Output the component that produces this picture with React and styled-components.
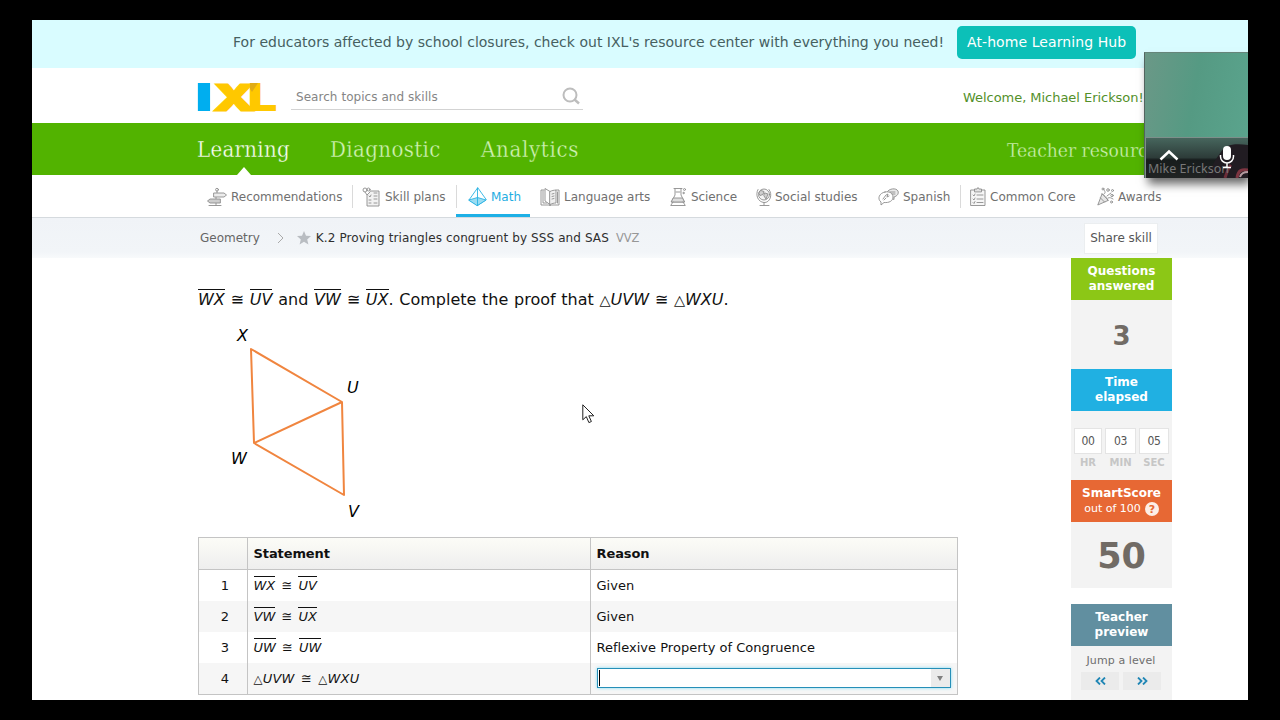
import React from "react";
import styled, { createGlobalStyle } from "styled-components";

const GlobalStyle = createGlobalStyle`
  * {
    box-sizing: border-box;
  }
  body {
    margin: 0;
    background: #000;
    font-family: "DejaVu Sans", Verdana, sans-serif;
    font-size: 12px;
  }
`;

const Stage = styled.div`
  width: 1280px;
  height: 720px;
  padding: 20px 32px;
  background: #000;
  overflow: hidden;
`;

const Screen = styled.div`
  position: relative;
  height: 680px;
  background: #fff;
  overflow: hidden;
`;

const T = styled.span`
  letter-spacing: ${(props) => props.$ls || 0}px;
  white-space: nowrap;
`;

const Banner = styled.div`
  display: flex;
  align-items: center;
  height: 48px;
  padding: 0 0 4px 201px;
  background: #d9fcff;
  color: #46605f;
  font-size: 14px;
`;

const HubButton = styled.button`
  width: 179px;
  height: 33px;
  margin-left: 13px;
  padding: 0;
  border: none;
  border-radius: 5px;
  background: #0cc0b8;
  color: #fff;
  font: 14px "DejaVu Sans", sans-serif;
`;

const Header = styled.header`
  display: flex;
  height: 55px;
  padding-left: 166px;
`;

const Logo = styled.svg`
  width: 80px;
  height: 30px;
  margin-top: 14px;
  overflow: visible;
`;

const Search = styled.div`
  display: flex;
  align-items: center;
  justify-content: space-between;
  width: 292px;
  height: 27px;
  margin: 15px 0 0 13px;
  padding: 0 3px 0 5px;
  border-bottom: 1px solid #d3d3d3;
  color: #858585;

  span {
    padding-top: 1px;
  }
`;

const Welcome = styled.div`
  margin: 21px 0 0 380px;
  color: #53902a;
  font-size: 13px;
  line-height: 18px;
`;

const MainNav = styled.nav`
  display: flex;
  height: 52px;
  padding-left: 165px;
  background: #52b300;
  font-family: "DejaVu Serif Condensed", "DejaVu Serif", serif;
  line-height: 54px;
  -webkit-text-stroke: 0.3px #52b300;
`;

const MainTab = styled.div`
  display: flex;
  flex-direction: column;
  width: ${(props) => props.$w}px;
  height: 52px;
  color: ${(props) => (props.$active ? "#fbfff6" : "#d2f3b6")};
  font-size: ${(props) => props.$size || 22}px;
`;

const Notch = styled.div`
  width: 0;
  margin: -10px 0 0 40px;
  border: 7px solid transparent;
  border-top: 0;
  border-bottom: 8px solid #fff;
`;

const SubNav = styled.nav`
  display: flex;
  height: 43px;
  padding-left: 165px;
  border-bottom: 1px solid #d5dade;
`;

const SubTab = styled.div`
  position: relative;
  display: flex;
  align-items: center;
  width: ${(props) => props.$w}px;
  height: 42px;
  padding: 4px 0 0 ${(props) => props.$pl || 10}px;
  color: ${(props) => (props.$active ? "#1fade2" : "#707070")};
  border-bottom: 3px solid ${(props) => (props.$active ? "#1eb0e6" : "transparent")};

  svg {
    margin-right: ${(props) => props.$gap || 4}px;
  }

  &::after {
    content: "";
    position: absolute;
    right: -1px;
    top: 10px;
    width: 1px;
    height: 23px;
    background: ${(props) => (props.$divider ? "#dadada" : "transparent")};
  }
`;

const Crumbs = styled.div`
  display: flex;
  align-items: center;
  height: 40px;
  padding-left: 168px;
  background: linear-gradient(#f0f3f7, #f2f5f8 85%, #f8fafb);
  color: #666;
`;

const Star = styled.svg`
  margin: 0 5px 0 12px;
`;

const SkillName = styled.span`
  color: #2e2e2e;
`;

const Code = styled.span`
  margin-left: 7px;
  color: #979797;
  font-size: 11.5px;
`;

const Share = styled.div`
  display: flex;
  align-items: center;
  justify-content: center;
  width: 74px;
  height: 31px;
  margin: 0 90px 0 auto;
  border: 1px solid #ebeef0;
  background: #fff;
  color: #555;
`;

const Body = styled.main`
  display: flex;
  justify-content: space-between;
  padding: 0 76px 0 166px;
`;

const Work = styled.section`
  width: 760px;
`;

const Question = styled.div`
  display: flex;
  align-items: center;
  height: 22px;
  margin-top: 30px;
  color: #111;
  font-size: 16px;
  white-space: pre;
  word-spacing: 0.7px;
`;

const Seg = styled.i`
  display: inline-block;
  height: ${(props) => (props.$small ? 19 : 20)}px;
  border-top: 1px solid #111;
  line-height: ${(props) => (props.$small ? 17 : 20)}px;
`;

const Tri = styled.span`
  font-size: 0.9em;
`;

const Figure = styled.svg`
  display: block;
  width: 180px;
  height: 227px;
  font: italic 16px "DejaVu Sans", sans-serif;
`;

const Table = styled.div`
  display: grid;
  grid-template-columns: 48px 343px 1fr;
  width: 760px;
  height: 158px;
  border: 1px solid #c4c4c4;
  font-size: 13px;
  color: #111;
`;

const Cell = styled.div`
  display: flex;
  align-items: center;
  height: 31px;
  padding: ${(props) => (props.$num ? "0 0 0 4px" : "0 6px 0 5.5px")};
  justify-content: ${(props) => (props.$num ? "center" : "flex-start")};
  border-left: ${(props) => (props.$num ? 0 : "1px solid #c4c4c4")};
  background: ${(props) => (props.$even ? "#f6f6f6" : "#fff")};
  white-space: pre;
  word-spacing: ${(props) => (props.$math ? 2 : 0)}px;
`;

const HeadCell = styled(Cell)`
  height: 32px;
  border-bottom: 1px solid #c4c4c4;
  background: linear-gradient(#fcfcf7, #eeeeee);
  font-weight: bold;
  letter-spacing: -0.1px;
`;

const Select = styled.div`
  display: flex;
  align-items: center;
  justify-content: space-between;
  width: 354px;
  height: 20px;
  margin-bottom: 1px;
  padding-left: 1px;
  border: 1px solid #268fb8;
  box-shadow: 0 0 3px #7fdcf5;
  background: #fff;
`;

const Caret = styled.div`
  width: 1px;
  height: 16px;
  background: #000;
`;

const Arrow = styled.div`
  display: flex;
  align-items: center;
  justify-content: center;
  width: 19px;
  height: 18px;
  background: #ebebeb;

  &::after {
    content: "";
    border: 3.5px solid transparent;
    border-top: 5px solid #808080;
    border-bottom: 0;
  }
`;

const Side = styled.aside`
  width: 101px;
  text-align: center;
`;

const SideTitle = styled.div`
  height: 42px;
  padding: 6px 0 0;
  background: ${(props) => props.$bg};
  color: #fff;
  font-size: 12px;
  font-weight: bold;
  line-height: 15px;
`;

const SubLine = styled.div`
  display: flex;
  align-items: center;
  justify-content: center;
  gap: 4px;
  height: 15px;
  font-size: 11px;
  font-weight: normal;
`;

const SidePanel = styled.div`
  height: ${(props) => props.$h}px;
  margin-bottom: ${(props) => props.$mb || 0}px;
  background: #f3f3f3;
  color: #716b65;
  font-weight: bold;
  font-size: ${(props) => props.$size || 12}px;
  line-height: ${(props) => props.$lh || props.$h + 2}px;
`;

const Timer = styled.div`
  display: grid;
  grid-template-columns: 28px 31px 30px;
  gap: 3px;
  padding: 17px 3px 0;
  font-size: 10px;
  line-height: 14px;
  color: #c6c6c6;
`;

const TimeBox = styled.div`
  height: 26px;
  margin-bottom: 2px;
  border: 1px solid #e4e4e4;
  background: #fff;
  color: #555;
  font: 12px/25px "DejaVu Sans Condensed", "DejaVu Sans", sans-serif;
  letter-spacing: -0.4px;
`;

const Jump = styled.div`
  display: grid;
  grid-template-columns: 38px 38px;
  justify-content: center;
  align-content: start;
  gap: 4px;
  height: 54px;
  padding: 8px 1px 0 0;
  background: #f3f3f3;
  color: #6e6e6e;
  font-size: 11px;
  line-height: 14px;
`;

const JumpLabel = styled.div`
  grid-column: 1 / 3;
`;

const JumpButton = styled.div`
  display: flex;
  align-items: center;
  justify-content: center;
  height: 18px;
  background: #ebebeb;
`;

/* floating webcam window on top of the page */
const Webcam = styled.div`
  position: absolute;
  left: 1112px;
  top: 32px;
  width: 104px;
  height: 126px;
  border-left: 1px solid #53645f;
  border-top: 1px solid #66857a;
  background: linear-gradient(100deg, #6b9887, #559a83 45%, #5ba58e);
  box-shadow: 3px 7px 9px -1px rgba(0, 0, 0, 0.6);
`;

const CamBar = styled.svg`
  display: block;
  margin-top: 84px;
`;

const Pointer = styled.svg`
  position: absolute;
  left: 550px;
  top: 384px;
`;

const Icon = ({ w = 20, active, children }) => (
  <svg
    width={w}
    height="20"
    viewBox={`0 0 ${w} 20`}
    fill="none"
    stroke={active ? "#29b2e3" : "#8d8d8d"}
    strokeWidth="0.9"
    strokeLinejoin="round"
    strokeLinecap="round"
  >
    {children}
  </svg>
);

const icons = {
  recommend: (
    <Icon w={20}>
      <circle cx="10" cy="2.7" r="1.4" />
      <path d="M10 4.200V6M9 10v2M9 16v2.500M2 18.500h12" />
      <path d="M7 6h10l2.500 2L17 10H7z" fill="#ececec" />
      <path d="M13 12H3l-2.500 2L3 16h10z" fill="#cdcdcd" />
    </Icon>
  ),
  plans: (
    <Icon w={18}>
      <path d="M8 4h9v15H5V8" fill="#f2f2f2" />
      <circle cx="3" cy="3" r="2" />
      <circle cx="6.500" cy="2.500" r="1.500" />
      <path d="M3 5l2 3 3-3M7 9l1 1 1-2M12 9h3M7 13h2M12 12h3M7 16h2M12 16h3M12 6h3" />
    </Icon>
  ),
  math: (
    <Icon w={19} active>
      <path d="M9.500 1L1 13l8.500 5.500L18 13z" />
      <path d="M1 13l8.500-2.500L18 13l-8.500 5.500z" fill="#9adcf2" />
      <path d="M9.500 1v17.500" />
    </Icon>
  ),
  language: (
    <Icon w={20}>
      <path d="M4 3H1v15h8l1 .8 1-.8h8V3h-3" />
      <path d="M10 4.5L5 1.5V14l5 3.5z" fill="#fff" />
      <path d="M10 4.5c2-1 4-1.5 6-1.3V16c-2 0-4 .5-6 1.5z" fill="#f0f0f0" />
      <path d="M3 4v12h4M12 7l2-.5M12 9.5l2-.5M12 12l2-.5M17.5 5v11" />
    </Icon>
  ),
  science: (
    <Icon w={17}>
      <path d="M4 1.500h8M5 2v6L1.500 15h13L11 8V2" />
      <path d="M3.500 11h9l2 4h-13z" fill="#dedede" />
      <path d="M1 18.500h14M3 15l-2 3M13 15l2 3M6 5h4" />
      <circle cx="14.500" cy="2.500" r="1" />
      <circle cx="13.500" cy="6" r=".7" />
    </Icon>
  ),
  social: (
    <Icon w={16}>
      <circle cx="8" cy="7.500" r="5.500" fill="#f4f4f4" />
      <path d="M5 3.500l3 1-1 3-3 1-1-2zM9 6l3 1-2 5-2-3z" fill="#cfcfcf" />
      <path d="M2 2.500C-1 8 2 15 8 15.500s9-8 5-13M8 15.500V18M4 18.500h9" />
    </Icon>
  ),
  spanish: (
    <Icon w={21}>
      <path d="M9 5c2-3.500 9-4.500 11-1 1 3-1 5-4 6v2.500L13 11" fill="#e9e9e9" />
      <path d="M7 5c4-1 8 1 8 5s-4 6-9 5.500L3 18v-3C-1 12 1 6 7 5z" fill="#fff" />
      <path d="M5 12l3-4 2-1-1 3 2-1M6 13l2-2M12 5h5M14 7h3" />
    </Icon>
  ),
  core: (
    <Icon w={16}>
      <path d="M1 3h14v15.500H1z" fill="#f6f6f6" />
      <path d="M4.500 4.500V2H7l1-1.500L9 2h2.500v2.500z" fill="#e2e2e2" />
      <path d="M3 8l1 1 1-2M3 12l1 1 1-2M3 15.500l1 1 1-2M7 8h6M7 12h6M7 15.500h6" />
    </Icon>
  ),
  awards: (
    <Icon w={17}>
      <path d="M5 7L.8 18 11 13.500z" fill="#e6e6e6" />
      <path d="M5 7c2 1 5 4 6 6.500M3.500 11l4 4M7 7c2-1 1-3 0-4M10 9l4-3M11 11c2-1 3 0 5 1" />
      <circle cx="6" cy="2" r="1" />
      <circle cx="11" cy="3" r="1.300" />
      <circle cx="15.500" cy="3.500" r="1" />
      <circle cx="15" cy="8.500" r="1.200" />
      <circle cx="14.500" cy="15" r="1" />
    </Icon>
  ),
};

const tabs = [
  { label: "Recommendations", icon: "recommend", w: 155, divider: true, ls: -0.02 },
  { label: "Skill plans", icon: "plans", w: 104, divider: true, gap: 5 },
  { label: "Math", icon: "math", w: 74, active: true, pl: 12 },
  { label: "Language arts", icon: "language", w: 130 },
  { label: "Science", icon: "science", w: 86, ls: -0.08 },
  { label: "Social studies", icon: "social", w: 122, gap: 3 },
  { label: "Spanish", icon: "spanish", w: 92, divider: true },
  { label: "Common Core", icon: "core", w: 127 },
  { label: "Awards", icon: "awards", w: 85 },
];

const rows = [
  { left: "WX", right: "UV", reason: "Given" },
  { left: "VW", right: "UX", reason: "Given" },
  { left: "UW", right: "UW", reason: "Reflexive Property of Congruence" },
];

const App = () => {
  return (
    <Stage>
      <GlobalStyle />
      <Screen>
        <Banner>
          <T $ls={0.015}>
            For educators affected by school closures, check out IXL's resource center with everything you need!
          </T>
          <HubButton>
            <T $ls={0.08}>At-home Learning Hub</T>
          </HubButton>
        </Banner>
        <Header>
          <Logo viewBox="0 0 80 30" fontFamily="Inter" fontWeight="900" fontSize="38.500">
            <text x="-3" y="29" fill="#00aeef" textLength="18" lengthAdjust="spacingAndGlyphs">I</text>
            <text x="14.500" y="28.500" fill="#ffc800" stroke="#ffc800" fontSize="37.500" textLength="43" lengthAdjust="spacingAndGlyphs">X</text>
            <text x="49.500" y="29" fill="#ffc800" textLength="30" lengthAdjust="spacingAndGlyphs">L</text>
            <path d="M52 1h8l-6 9-2-3z" fill="#e0ac16" />
          </Logo>
          <Search>
            <T $ls={0.05}>Search topics and skills</T>
            <svg width="18" height="18" viewBox="0 0 18 18" fill="none" stroke="#bdbdbd" strokeWidth="2">
              <circle cx="8" cy="8" r="6.500" />
              <path d="M12.500 12.500L17 16.500" strokeWidth="2.500" />
            </svg>
          </Search>
          <Welcome>
            <T $ls={-0.04}>Welcome, Michael Erickson!</T>
          </Welcome>
        </Header>
        <MainNav>
          <MainTab $w={133} $active>
            <T $ls={0.3}>Learning</T>
            <Notch />
          </MainTab>
          <MainTab $w={151}>
            <T $ls={0.4}>Diagnostic</T>
          </MainTab>
          <MainTab $w={526}>
            <T $ls={0.7}>Analytics</T>
          </MainTab>
          <MainTab $w={170} $size={19}>
            <T>Teacher resources</T>
          </MainTab>
        </MainNav>
        <SubNav>
          {tabs.map((tab) => (
            <SubTab
              key={tab.label}
              $w={tab.w}
              $pl={tab.pl}
              $gap={tab.gap}
              $active={tab.active}
              $divider={tab.divider}
            >
              {icons[tab.icon]}
              <T $ls={tab.ls}>{tab.label}</T>
            </SubTab>
          ))}
        </SubNav>
        <Crumbs>
          <T>Geometry</T>
          <svg width="8" height="12" viewBox="0 0 8 12" fill="none" stroke="#aaa" style={{ marginLeft: 17 }}>
            <path d="M1 1l5 5-5 5" />
          </svg>
          <Star width="14" height="14" viewBox="0 0 14 14" fill="#b9bdc2">
            <path d="M7 0l2 4.700 5 .4-3.800 3.300 1.200 5L7 10.700 2.600 13.400l1.200-5L0 5.100l5-.4z" />
          </Star>
          <SkillName>
            <T $ls={0.1}>K.2 Proving triangles congruent by SSS and SAS</T>
          </SkillName>
          <Code>VVZ</Code>
          <Share>
            <T>Share skill</T>
          </Share>
        </Crumbs>
        <Body>
          <Work>
            <Question>
              <Seg>WX</Seg> ≅ <Seg>UV</Seg> and <Seg>VW</Seg> ≅ <Seg>UX</Seg>
              <T $ls={-0.02}>. Complete the proof that <Tri>△</Tri><i>UVW</i> ≅ <Tri>△</Tri><i>WXU</i>.</T>
            </Question>
            <Figure viewBox="0 0 180 227">
              <g fill="none" stroke="#f0853f" strokeWidth="2" strokeLinejoin="round">
                <path d="M53 39L144 92L146 185L56 133Z" />
                <path d="M56 133L144 92" />
              </g>
              <text x="39" y="31">X</text>
              <text x="149" y="83">U</text>
              <text x="33" y="154">W</text>
              <text x="150" y="207">V</text>
            </Figure>
            <Table>
              <HeadCell $num />
              <HeadCell>Statement</HeadCell>
              <HeadCell>Reason</HeadCell>
              {rows.map((row, i) => (
                <React.Fragment key={i}>
                  <Cell $num $even={i % 2 === 1}>{i + 1}</Cell>
                  <Cell $math $even={i % 2 === 1}>
                    <Seg $small>{row.left}</Seg> ≅ <Seg $small>{row.right}</Seg>
                  </Cell>
                  <Cell $even={i % 2 === 1}>
                    <T $ls={0.02}>{row.reason}</T>
                  </Cell>
                </React.Fragment>
              ))}
              <Cell $num $even>4</Cell>
              <Cell $math $even>
                <T $ls={0.2}><Tri>△</Tri><i>UVW</i> ≅ <Tri>△</Tri><i>WXU</i></T>
              </Cell>
              <Cell $even>
                <Select>
                  <Caret />
                  <Arrow />
                </Select>
              </Cell>
            </Table>
          </Work>
          <Side>
            <SideTitle $bg="#8cc716">Questions<br />answered</SideTitle>
            <SidePanel $h={69} $lh={73} $size={26}>3</SidePanel>
            <SideTitle $bg="#20b0e2">Time<br />elapsed</SideTitle>
            <SidePanel $h={69}>
              <Timer>
                <div><TimeBox>00</TimeBox>HR</div>
                <div><TimeBox>03</TimeBox>MIN</div>
                <div><TimeBox>05</TimeBox>SEC</div>
              </Timer>
            </SidePanel>
            <SideTitle $bg="#e76834">
              SmartScore
              <SubLine>
                <T>out of 100</T>
                <svg width="14" height="14" viewBox="0 0 14 14">
                  <circle cx="7" cy="7" r="7" fill="#fdeee6" />
                  <text x="7" y="11" textAnchor="middle" fontSize="11" fontWeight="bold" fill="#e76834">?</text>
                </svg>
              </SubLine>
            </SideTitle>
            <SidePanel $h={66} $mb={16} $size={35}>50</SidePanel>
            <SideTitle $bg="#618fa0">Teacher<br />preview</SideTitle>
            <Jump>
              <JumpLabel><T $ls={0.1}>Jump a level</T></JumpLabel>
              <JumpButton>
                <svg width="11" height="8" viewBox="0 0 11 8" fill="none" stroke="#1f86b5" strokeWidth="1.800">
                  <path d="M5 0.500L1.500 4L5 7.500M10 0.500L6.500 4L10 7.500" />
                </svg>
              </JumpButton>
              <JumpButton>
                <svg width="11" height="8" viewBox="0 0 11 8" fill="none" stroke="#1f86b5" strokeWidth="1.800">
                  <path d="M1 0.500L4.500 4L1 7.500M6 0.500L9.500 4L6 7.500" />
                </svg>
              </JumpButton>
            </Jump>
          </Side>
        </Body>
        <Webcam>
          <CamBar width="103" height="41" viewBox="0 0 103 41">
            <defs>
              <linearGradient id="bar" x1="0" y1="0" x2="0" y2="1">
                <stop offset="0" stopColor="#48685f" />
                <stop offset="0.5" stopColor="#2d3c39" />
                <stop offset="0.56" stopColor="#171c1c" />
                <stop offset="1" stopColor="#202323" />
              </linearGradient>
            </defs>
            <rect width="103" height="41" fill="url(#bar)" />
            <path d="M60 41c6-8 8-16 16-26 4-7 12-9 27-7v33z" fill="#211c22" />
            <path d="M80 41c2-6 3-10 6-13" fill="none" stroke="#6b2d38" strokeWidth="3" />
            <path d="M92 41c1-8 5-9 11-8" fill="none" stroke="#7d3541" strokeWidth="3" />
            <path d="M95 40c1-4 4-5 8-5" fill="none" stroke="#b69aa0" strokeWidth="2" />
            <path d="M0 .500h103M.500 0v41" stroke="#7d8f8a" />
            <text x="3" y="35.500" fontFamily="Noto Sans" fontSize="12.500" fill="#777" textLength="81">Mike Erickson</text>
            <path d="M15.500 22.500L24 14.500l8.500 8" fill="none" stroke="#fff" strokeWidth="2.500" />
            <rect x="78" y="9" width="8" height="14" rx="4" fill="#fff" />
            <path d="M75.500 18v1.500a6.500 6.500 0 0 0 13 0V18M82 26v4M78 30.500h8" fill="none" stroke="#fff" strokeWidth="1.500" />
          </CamBar>
        </Webcam>
        <Pointer width="13" height="20" viewBox="0 0 13 20">
          <path d="M.8.800v15l3.500-3.200 2.600 6 2.500-1.100-2.600-5.700h5z" fill="#fff" stroke="#222" />
        </Pointer>
      </Screen>
    </Stage>
  );
};

export default App;
